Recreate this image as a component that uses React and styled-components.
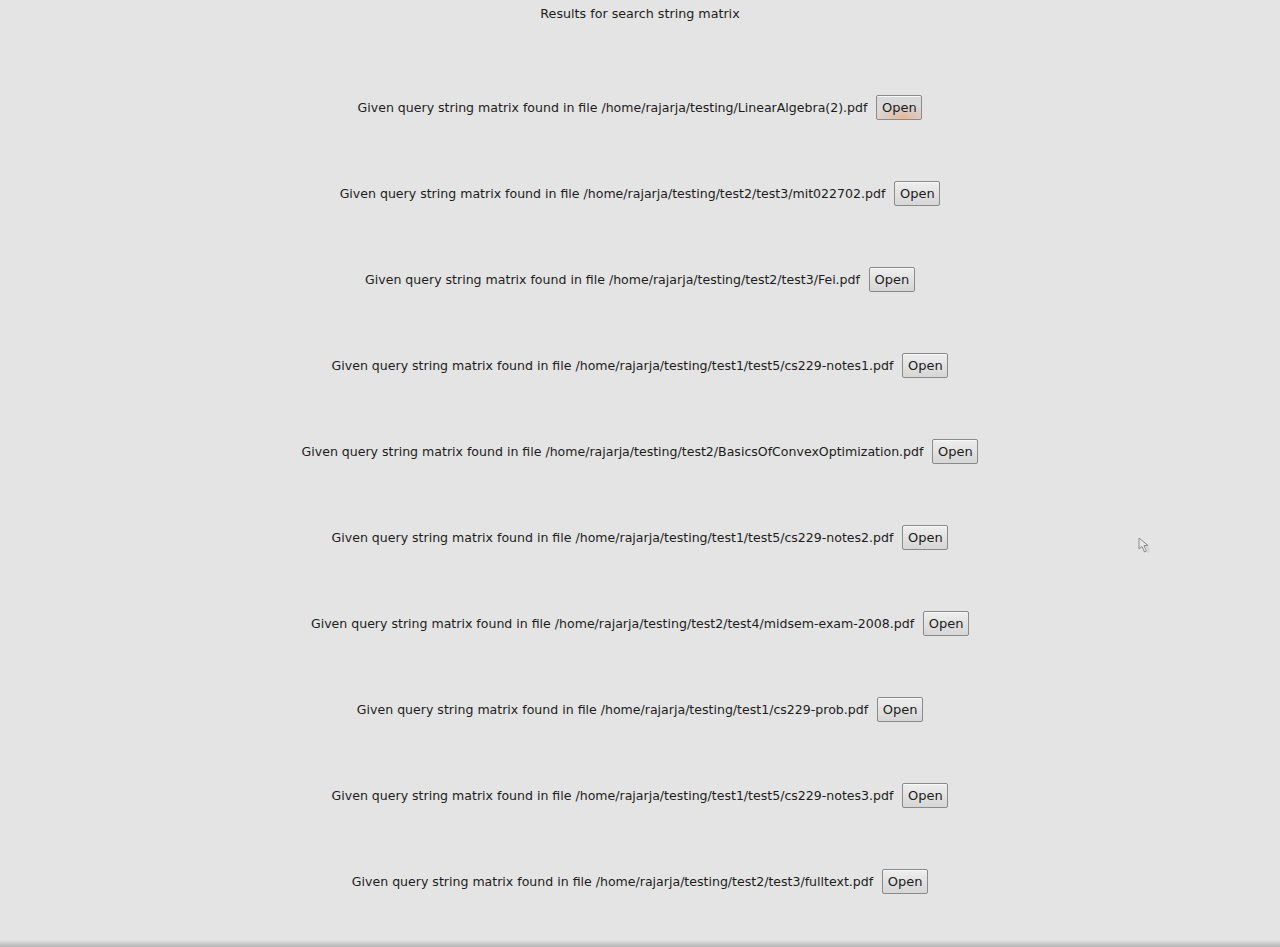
import React from "react";
import styled, { createGlobalStyle } from "styled-components";

const GlobalStyle = createGlobalStyle`
  html, body {
    margin: 0;
    padding: 0;
    background: #e4e4e4;
  }
  body {
    font-family: "DejaVu Sans", "Liberation Sans", sans-serif;
    color: #1c1c1c;
  }
`;

const Page = styled.div`
  position: relative;
  height: 947px;
  display: flex;
  flex-direction: column;
  background: #e4e4e4;
  overflow: hidden;
`;

const Title = styled.div`
  height: 26px;
  display: flex;
  align-items: center;
  justify-content: center;
  font-size: 12.7px;
`;

const List = styled.div`
  padding-top: 38px;
  display: flex;
  flex-direction: column;
`;

const Row = styled.div`
  height: 86px;
  display: flex;
  align-items: center;
  justify-content: center;
  gap: 9px;
  font-size: 12.55px;
`;

const OpenButton = styled.button`
  width: 46px;
  height: 25px;
  padding: 0;
  font-family: "DejaVu Sans", "Liberation Sans", sans-serif;
  font-size: 13px;
  color: #1c1c1c;
  border: 1px solid #8a8a8a;
  border-radius: 2px;
  background: ${(p) =>
    p.$hover
      ? "radial-gradient(ellipse 70% 60% at 60% 95%, #e6b898 0%, #dccbc0 55%, #dadada 100%)"
      : "linear-gradient(#eeeeee, #d6d6d6)"};
  box-shadow: inset 0 1px 0 #f8f8f8;
`;

const Spacer = styled.div`
  flex: 1;
`;

const BottomEdge = styled.div`
  height: 7px;
  background: linear-gradient(#e4e4e4, #b4b4b4);
`;

const Cursor = styled.svg`
  position: absolute;
  left: 1138px;
  top: 537px;
`;

const results = [
  "/home/rajarja/testing/LinearAlgebra(2).pdf",
  "/home/rajarja/testing/test2/test3/mit022702.pdf",
  "/home/rajarja/testing/test2/test3/Fei.pdf",
  "/home/rajarja/testing/test1/test5/cs229-notes1.pdf",
  "/home/rajarja/testing/test2/BasicsOfConvexOptimization.pdf",
  "/home/rajarja/testing/test1/test5/cs229-notes2.pdf",
  "/home/rajarja/testing/test2/test4/midsem-exam-2008.pdf",
  "/home/rajarja/testing/test1/cs229-prob.pdf",
  "/home/rajarja/testing/test1/test5/cs229-notes3.pdf",
  "/home/rajarja/testing/test2/test3/fulltext.pdf",
];

export default function App() {
  const query = "matrix";
  return (
    <>
      <GlobalStyle />
      <Page>
        <Title>Results for search string {query}</Title>
        <List>
          {results.map((file, i) => (
            <Row key={file}>
              <span>
                Given query string {query} found in file {file}
              </span>
              <OpenButton $hover={i === 0}>Open</OpenButton>
            </Row>
          ))}
        </List>
        <Spacer />
        <BottomEdge />
        <Cursor width="14" height="18" viewBox="0 0 14 18">
          <path d="M1 1 L1 12 L4 9.5 L6.5 15 L8.5 14 L6 8.5 L10 8.5 Z" fill="#e8e8e8" stroke="#8a8a8a" strokeWidth="1" />
          <path d="M7 9 L11 9 L12 15 L9 16 Z" fill="#cfcfcf" opacity="0.6" />
        </Cursor>
      </Page>
    </>
  );
}
